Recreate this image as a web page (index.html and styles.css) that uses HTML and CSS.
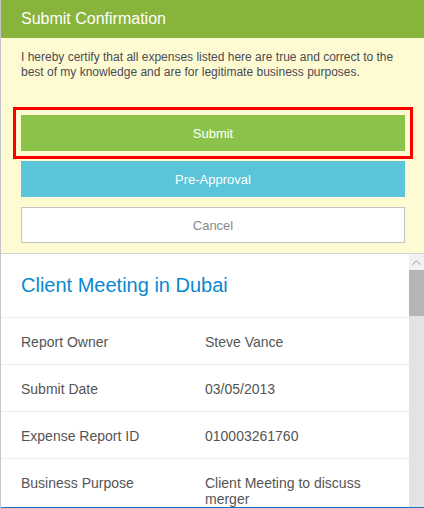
FILE: index.html
```html
<!DOCTYPE html>
<html>
<head>
<meta charset="utf-8">
<link rel="stylesheet" href="styles.css">
</head>
<body>
<div class="app">
  <div class="header">Submit Confirmation</div>
  <div class="confirm">
    <p class="certify">I hereby certify that all expenses listed here are true and correct to the best of my knowledge and are for legitimate business purposes.</p>
    <div class="actions">
      <button class="btn btn-submit">Submit</button>
      <button class="btn btn-pre">Pre-Approval</button>
      <button class="btn btn-cancel">Cancel</button>
    </div>
  </div>
  <div class="details">
    <div class="details-main">
      <div class="title-row">Client Meeting in Dubai</div>
      <div class="row"><div class="label">Report Owner</div><div class="value">Steve Vance</div></div>
      <div class="row"><div class="label">Submit Date</div><div class="value">03/05/2013</div></div>
      <div class="row"><div class="label">Expense Report ID</div><div class="value">010003261760</div></div>
      <div class="row"><div class="label">Business Purpose</div><div class="value">Client Meeting to discuss merger</div></div>
    </div>
    <div class="scrollbar">
      <div class="sb-arrow">
        <svg width="9" height="5" viewBox="0 0 9 5"><polyline points="0.5,4.5 4.5,0.8 8.5,4.5" fill="none" stroke="#9a9a9a" stroke-width="1"/></svg>
      </div>
      <div class="sb-thumb"></div>
      <div class="sb-track"></div>
    </div>
  </div>
</div>
</body>
</html>
```
FILE: styles.css
```css
html, body {
  margin: 0;
  padding: 0;
  background: #fff;
}
body {
  font-family: "Liberation Sans", Arial, sans-serif;
}
.app {
  width: 424px;
  height: 508px;
  box-sizing: border-box;
  border-left: 1px solid #c4c4cc;
  display: flex;
  flex-direction: column;
  overflow: hidden;
}
.header {
  height: 38px;
  line-height: 38px;
  padding-left: 20px;
  background: #88b43c;
  color: #fff;
  font-size: 16px;
  flex: none;
}
.confirm {
  background: #fefbd2;
  padding: 12px 19px 10px 20px;
  flex: none;
}
.certify {
  margin: 0 0 35px 0;
  font-size: 12px;
  line-height: 15px;
  color: #4a4a52;
}
.actions {
  display: flex;
  flex-direction: column;
  gap: 10px;
}
.btn {
  display: block;
  width: 100%;
  height: 36px;
  margin: 0;
  padding: 0;
  border: none;
  font-family: "Liberation Sans", Arial, sans-serif;
  font-size: 13px;
  color: #fff;
  text-align: center;
  cursor: pointer;
}
.btn-submit {
  background: #8bc34a;
  outline: 3px solid #ff0000;
  outline-offset: 5px;
}
.btn-pre {
  background: #5ac4d8;
}
.btn-cancel {
  background: #fff;
  border: 1px solid #c4c4c4;
  color: #8a8a8a;
}
.details {
  flex: 1;
  min-height: 0;
  display: flex;
  border-top: 1px solid #d4d4d4;
  border-bottom: 1px solid #1e73be;
}
.details-main {
  flex: 1;
  min-width: 0;
  overflow: hidden;
}
.title-row {
  padding: 19px 20px 20px 20px;
  font-size: 20px;
  line-height: 24px;
  color: #0a88cf;
  border-bottom: 1px solid #eeeeee;
}
.row {
  display: grid;
  grid-template-columns: 184px 1fr;
  padding: 16px 20px 14px 20px;
  font-size: 14px;
  line-height: 16px;
  color: #555;
  border-bottom: 1px solid #eeeeee;
}
.scrollbar {
  width: 15px;
  flex: none;
  display: flex;
  flex-direction: column;
  background: #e3e3e3;
}
.sb-arrow {
  height: 16px;
  background: #f1f1f1;
  display: flex;
  align-items: center;
  justify-content: center;
}
.sb-arrow svg {
  display: block;
}
.sb-thumb {
  height: 46px;
  background: #b5b5b5;
}
.sb-track {
  flex: 1;
  background: #e3e3e3;
}
```
